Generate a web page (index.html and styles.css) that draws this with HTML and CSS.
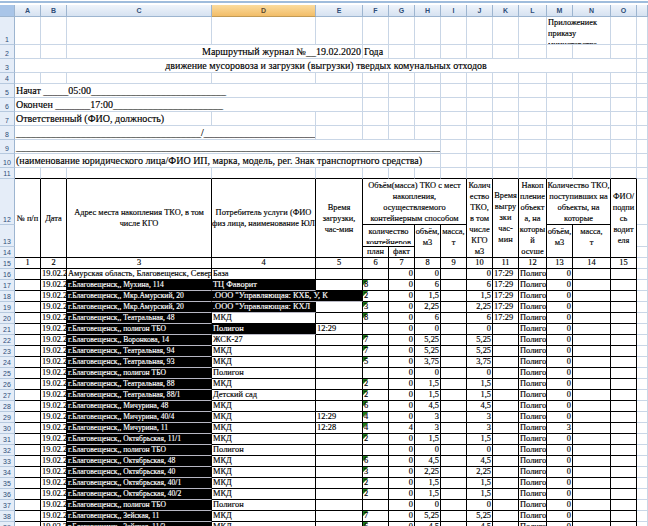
FILE: index.html
```html
<!DOCTYPE html>
<html lang="ru">
<head>
<meta charset="utf-8">
<title>Маршрутный журнал</title>
<link rel="stylesheet" href="styles.css">
</head>
<body>
<div class="ribbon-edge"></div>
<table class="sheet">
<colgroup>
<col class="w15"><col class="w26"><col class="w26"><col class="w145"><col class="w104"><col class="w47"><col class="w26"><col class="w26"><col class="w26"><col class="w26"><col class="w26"><col class="w26"><col class="w28"><col class="w26"><col class="w38"><col class="w26"><col class="w11">
</colgroup>
<tbody>
<tr class="h12 cols"><th class="corner"></th><th>A</th><th>B</th><th>C</th><th class="sel">D</th><th>E</th><th>F</th><th>G</th><th>H</th><th>I</th><th>J</th><th>K</th><th>L</th><th>M</th><th>N</th><th>O</th><th></th></tr>
<tr class="h28"><th>1</th><td></td><td></td><td></td><td></td><td></td><td></td><td></td><td></td><td></td><td></td><td></td><td></td><td colspan="2" class="note"><div class="clip28">Приложениек<br>приказу<br>министерства</div></td><td></td><td></td></tr>
<tr class="h14"><th>2</th><td></td><td></td><td colspan="3" class="right title">Маршрутный журнал №__19.02.2020</td><td class="title">Года</td><td></td><td></td><td></td><td></td><td></td><td></td><td></td><td></td><td></td><td></td></tr>
<tr class="h14"><th>3</th><td colspan="15" class="center title">движение мусоровоза и загрузки (выгрузки) твердых комунальных отходов</td><td></td></tr>
<tr class="h11"><th>4</th><td></td><td></td><td></td><td></td><td></td><td></td><td></td><td></td><td></td><td></td><td></td><td></td><td></td><td></td><td></td><td></td></tr>
<tr class="h14"><th>5</th><td colspan="5" class="title">Начат _____05:00___________________________</td><td></td><td></td><td></td><td></td><td></td><td></td><td></td><td></td><td></td><td></td><td></td></tr>
<tr class="h14"><th>6</th><td colspan="5" class="title">Окончен _______17:00______________________</td><td></td><td></td><td></td><td></td><td></td><td></td><td></td><td></td><td></td><td></td><td></td></tr>
<tr class="h14"><th>7</th><td colspan="3" class="title">Ответственный (ФИО, должность)</td><td></td><td></td><td></td><td></td><td></td><td></td><td></td><td></td><td></td><td></td><td></td><td></td><td></td></tr>
<tr class="h14"><th>8</th><td colspan="4" class="title">_____________________________________/_______________________</td><td></td><td></td><td></td><td></td><td></td><td></td><td></td><td></td><td></td><td></td><td></td><td></td></tr>
<tr class="h14"><th>9</th><td colspan="8" class="title">_____________________________________________________________________________________</td><td></td><td></td><td></td><td></td><td></td><td></td><td></td><td></td></tr>
<tr class="h14"><th>10</th><td colspan="8" class="title">(наименование юридического лица/ФИО ИП, марка, модель, рег. Знак транспортного средства)</td><td></td><td></td><td></td><td></td><td></td><td></td><td></td><td></td></tr>
<tr class="h11 under"><th>11</th><td></td><td></td><td></td><td></td><td></td><td></td><td></td><td></td><td></td><td></td><td></td><td></td><td></td><td></td><td></td><td class="plain"></td></tr>

<tr class="h46 hd"><th>12</th>
<td rowspan="3">№ п/п</td>
<td rowspan="3">Дата</td>
<td rowspan="3">Адрес места накопления ТКО, в том<br>числе КГО</td>
<td rowspan="3">Потребитель услуги (ФИО<br>физ лица, наименование ЮЛ)</td>
<td rowspan="3">Время<br>загрузки,<br>час-мин</td>
<td colspan="4">Объём(масса) ТКО с мест<br>накопления,<br>осуществляемого<br>контейнерным способом</td>
<td rowspan="3" class="top">Колич<br>ество<br>ТКО,<br>в том<br>числе<br>КГО<br>м3</td>
<td rowspan="3" class="top pad">Время<br>выгру<br>зки<br>час-<br>мин</td>
<td rowspan="3" class="top"><div class="clip-l">Накоп<br>пление<br>объект<br>а, на<br>которы<br>й<br>осуще</div></td>
<td colspan="2">Количество ТКО,<br>поступивших на<br>объекты, на<br>которые</td>
<td rowspan="3" class="top pad2">ФИО/<br>подпи<br>сь<br>водит<br>еля</td>
<td class="plain"></td></tr>
<tr class="h19 hd"><th>13</th>
<td colspan="2" class="top"><div class="clip18">количество<br>контейнеров</div></td>
<td rowspan="2" class="top">объём,<br>м3</td>
<td rowspan="2" class="top">масса,<br>т</td>
<td rowspan="2" class="top">объём,<br>м3</td>
<td rowspan="2" class="top">масса,<br>т</td>
<td class="plain"></td></tr>
<tr class="h11 hd"><th>14</th><td>план</td><td>факт</td><td class="plain"></td></tr>
<tr class="h11 hd"><th>15</th><td>1</td><td>2</td><td>3</td><td>4</td><td>5</td><td>6</td><td>7</td><td>8</td><td>9</td><td>10</td><td>11</td><td>12</td><td>13</td><td>14</td><td>15</td><td class="plain"></td></tr>

<tr class="h11 dt"><th>16</th><td></td><td>19.02.2020</td><td>Амурская область, Благовещенск, Северное шоссе</td><td>База</td><td></td><td></td><td class="right">0</td><td class="right">0</td><td></td><td class="right">0</td><td>17:29</td><td>Полигон</td><td class="right">0</td><td></td><td></td><td class="plain"></td></tr>
<tr class="h11 dt"><th>17</th><td></td><td>19.02.2020</td><td class="ink addr">г.Благовещенск,, Мухина, 114</td><td class="ink">ТЦ Фаворит</td><td></td><td class="flag">8</td><td class="right">0</td><td class="right">6</td><td></td><td class="right">6</td><td>17:29</td><td>Полигон</td><td class="right">0</td><td></td><td></td><td class="plain"></td></tr>
<tr class="h11 dt"><th>18</th><td></td><td>19.02.2020</td><td class="ink addr">г.Благовещенск,, Мкр.Амурский, 20</td><td class="ink" colspan="2">.ООО "Управляющая: КХБ, У, К</td><td class="flag">2</td><td class="right">0</td><td class="right">1,5</td><td></td><td class="right">1,5</td><td>17:29</td><td>Полигон</td><td class="right">0</td><td></td><td></td><td class="plain"></td></tr>
<tr class="h11 dt"><th>19</th><td></td><td>19.02.2020</td><td class="ink addr">г.Благовещенск,, Мкр.Амурский, 20</td><td class="ink">.ООО "Управляющая: КХЛ</td><td></td><td class="flag">3</td><td class="right">0</td><td class="right">2,25</td><td></td><td class="right">2,25</td><td>17:29</td><td>Полигон</td><td class="right">0</td><td></td><td></td><td class="plain"></td></tr>
<tr class="h11 dt"><th>20</th><td></td><td>19.02.2020</td><td class="ink addr">г.Благовещенск,, Театральная, 48</td><td>МКД</td><td></td><td class="flag">8</td><td class="right">0</td><td class="right">6</td><td></td><td class="right">6</td><td>17:29</td><td>Полигон</td><td class="right">0</td><td></td><td></td><td class="plain"></td></tr>
<tr class="h11 dt"><th>21</th><td></td><td>19.02.2020</td><td class="ink addr">г.Благовещенск,, полигон ТБО</td><td class="ink">Полигон</td><td>12:29</td><td></td><td class="right">0</td><td class="right">0</td><td></td><td class="right">0</td><td></td><td>Полигон</td><td class="right">0</td><td></td><td></td><td class="plain"></td></tr>
<tr class="h11 dt"><th>22</th><td></td><td>19.02.2020</td><td class="ink addr">г.Благовещенск,, Воронкова, 14</td><td>ЖСК-27</td><td></td><td class="flag">7</td><td class="right">0</td><td class="right">5,25</td><td></td><td class="right">5,25</td><td></td><td>Полигон</td><td class="right">0</td><td></td><td></td><td class="plain"></td></tr>
<tr class="h11 dt"><th>23</th><td></td><td>19.02.2020</td><td class="ink addr">г.Благовещенск,, Театральная, 94</td><td>МКД</td><td></td><td class="flag">7</td><td class="right">0</td><td class="right">5,25</td><td></td><td class="right">5,25</td><td></td><td>Полигон</td><td class="right">0</td><td></td><td></td><td class="plain"></td></tr>
<tr class="h11 dt"><th>24</th><td></td><td>19.02.2020</td><td class="ink addr">г.Благовещенск,, Театральная, 93</td><td>МКД</td><td></td><td class="flag">5</td><td class="right">0</td><td class="right">3,75</td><td></td><td class="right">3,75</td><td></td><td>Полигон</td><td class="right">0</td><td></td><td></td><td class="plain"></td></tr>
<tr class="h11 dt"><th>25</th><td></td><td>19.02.2020</td><td class="ink addr">г.Благовещенск,, полигон ТБО</td><td>Полигон</td><td></td><td></td><td class="right">0</td><td class="right">0</td><td></td><td class="right">0</td><td></td><td>Полигон</td><td class="right">0</td><td></td><td></td><td class="plain"></td></tr>
<tr class="h11 dt"><th>26</th><td></td><td>19.02.2020</td><td class="ink addr">г.Благовещенск,, Театральная, 88</td><td>МКД</td><td></td><td class="flag">2</td><td class="right">0</td><td class="right">1,5</td><td></td><td class="right">1,5</td><td></td><td>Полигон</td><td class="right">0</td><td></td><td></td><td class="plain"></td></tr>
<tr class="h11 dt"><th>27</th><td></td><td>19.02.2020</td><td class="ink addr">г.Благовещенск,, Театральная, 88/1</td><td>Детский сад</td><td></td><td class="flag">2</td><td class="right">0</td><td class="right">1,5</td><td></td><td class="right">1,5</td><td></td><td>Полигон</td><td class="right">0</td><td></td><td></td><td class="plain"></td></tr>
<tr class="h11 dt"><th>28</th><td></td><td>19.02.2020</td><td class="ink addr">г.Благовещенск,, Мичурина, 48</td><td>МКД</td><td></td><td class="flag">6</td><td class="right">0</td><td class="right">4,5</td><td></td><td class="right">4,5</td><td></td><td>Полигон</td><td class="right">0</td><td></td><td></td><td class="plain"></td></tr>
<tr class="h11 dt"><th>29</th><td></td><td>19.02.2020</td><td class="ink addr">г.Благовещенск,, Мичурина, 40/4</td><td>МКД</td><td>12:29</td><td class="flag">4</td><td class="right">0</td><td class="right">3</td><td></td><td class="right">3</td><td></td><td>Полигон</td><td class="right">0</td><td></td><td></td><td class="plain"></td></tr>
<tr class="h11 dt"><th>30</th><td></td><td>19.02.2020</td><td class="ink addr">г.Благовещенск,, Мичурина, 11</td><td>МКД</td><td>12:28</td><td class="flag">4</td><td class="right">4</td><td class="right">3</td><td></td><td class="right">3</td><td></td><td>Полигон</td><td class="right">3</td><td></td><td></td><td class="plain"></td></tr>
<tr class="h11 dt"><th>31</th><td></td><td>19.02.2020</td><td class="ink addr">г.Благовещенск,, Октябрьская, 11/1</td><td>МКД</td><td></td><td class="flag">2</td><td class="right">0</td><td class="right">1,5</td><td></td><td class="right">1,5</td><td></td><td>Полигон</td><td class="right">0</td><td></td><td></td><td class="plain"></td></tr>
<tr class="h11 dt"><th>32</th><td></td><td>19.02.2020</td><td class="ink addr">г.Благовещенск,, полигон ТБО</td><td>Полигон</td><td></td><td></td><td class="right">0</td><td class="right">0</td><td></td><td class="right">0</td><td></td><td>Полигон</td><td class="right">0</td><td></td><td></td><td class="plain"></td></tr>
<tr class="h11 dt"><th>33</th><td></td><td>19.02.2020</td><td class="ink addr">г.Благовещенск,, Октябрьская, 48</td><td>МКД</td><td></td><td class="flag">6</td><td class="right">0</td><td class="right">4,5</td><td></td><td class="right">4,5</td><td></td><td>Полигон</td><td class="right">0</td><td></td><td></td><td class="plain"></td></tr>
<tr class="h11 dt"><th>34</th><td></td><td>19.02.2020</td><td class="ink addr">г.Благовещенск,, Октябрьская, 40</td><td>МКД</td><td></td><td class="flag">3</td><td class="right">0</td><td class="right">2,25</td><td></td><td class="right">2,25</td><td></td><td>Полигон</td><td class="right">0</td><td></td><td></td><td class="plain"></td></tr>
<tr class="h11 dt"><th>35</th><td></td><td>19.02.2020</td><td class="ink addr">г.Благовещенск,, Октябрьская, 40/1</td><td>МКД</td><td></td><td class="flag">2</td><td class="right">0</td><td class="right">1,5</td><td></td><td class="right">1,5</td><td></td><td>Полигон</td><td class="right">0</td><td></td><td></td><td class="plain"></td></tr>
<tr class="h11 dt"><th>36</th><td></td><td>19.02.2020</td><td class="ink addr">г.Благовещенск,, Октябрьская, 40/2</td><td>МКД</td><td></td><td class="flag">2</td><td class="right">0</td><td class="right">1,5</td><td></td><td class="right">1,5</td><td></td><td>Полигон</td><td class="right">0</td><td></td><td></td><td class="plain"></td></tr>
<tr class="h11 dt"><th>37</th><td></td><td>19.02.2020</td><td class="ink addr">г.Благовещенск,, полигон ТБО</td><td>Полигон</td><td></td><td></td><td class="right">0</td><td class="right">0</td><td></td><td class="right">0</td><td></td><td>Полигон</td><td class="right">0</td><td></td><td></td><td class="plain"></td></tr>
<tr class="h11 dt"><th>38</th><td></td><td>19.02.2020</td><td class="ink addr">г.Благовещенск,, Зейская, 11</td><td>МКД</td><td></td><td class="flag">7</td><td class="right">0</td><td class="right">5,25</td><td></td><td class="right">5,25</td><td></td><td>Полигон</td><td class="right">0</td><td></td><td></td><td class="plain"></td></tr>
<tr class="h11 dt"><th>39</th><td></td><td>19.02.2020</td><td class="ink addr">г.Благовещенск,, Зейская, 11/3</td><td>МКД</td><td></td><td class="flag">6</td><td class="right">0</td><td class="right">4,5</td><td></td><td class="right">4,5</td><td></td><td>Полигон</td><td class="right">0</td><td></td><td></td><td class="plain"></td></tr>
</tbody>
</table>
</body>
</html>
```

FILE: styles.css
```css
html, body {
  margin: 0;
  padding: 0;
  width: 648px;
  height: 526px;
  overflow: hidden;
  background: #fff;
}

.ribbon-edge {
  height: 5px;
  box-sizing: border-box;
  border-top: 1px solid #fff;
  border-bottom: 2px solid #fff;
  background-clip: padding-box;
  background-color: #9fbcdc;
}

.sheet {
  table-layout: fixed;
  border-collapse: separate;
  border-spacing: 0;
  width: 648px;
  font-family: "Liberation Serif", "Times New Roman", serif;
  font-size: 8.4px;
  line-height: 11px;
  color: #000;
}

.w15 { width: 15px; }
.w26 { width: 26px; }
.w145 { width: 145px; }
.w104 { width: 104px; }
.w47 { width: 47px; }
.w28 { width: 28px; }
.w38 { width: 38px; }
.w11 { width: 11px; }

.h11 { height: 11px; }
.h12 { height: 12px; }
.h14 { height: 14px; }
.h19 { height: 19px; }
.h28 { height: 28px; }
.h46 { height: 46px; }

.sheet td,
.sheet th {
  box-sizing: border-box;
  padding: 0;
  overflow: hidden;
  white-space: nowrap;
  border-right: 1px solid #c9d6e6;
  border-bottom: 1px solid #c9d6e6;
}

.sheet td {
  padding-left: 1px;
  vertical-align: middle;
  -webkit-text-stroke: 0.15px currentColor;
}

.sheet .h11 td {
  line-height: 10px;
}

.sheet .h14 td {
  line-height: 13px;
}

.sheet th {
  font-family: "Liberation Sans", Arial, sans-serif;
  font-size: 7px;
  line-height: 8px;
  font-weight: normal;
  color: #2f4d78;
  background: #e5edf8;
  border-right-color: #9db5d0;
  border-bottom-color: #b6c9df;
  vertical-align: bottom;
  text-align: center;
}

.sheet .cols th {
  background: linear-gradient(#eff4fb, #d6e2f1);
  border-right-color: #9db5d0;
  border-bottom-color: #9db5d0;
  vertical-align: middle;
  font-weight: bold;
}

.sheet .cols th.corner {
  background: #a9c5e8;
}

.sheet .cols th.sel {
  background: linear-gradient(#fbdc9f, #f2bd68);
  color: #5b4a2e;
  border-bottom-color: #c29b55;
}

.title {
  font-size: 10px;
}

.sheet td.right {
  text-align: right;
  padding-right: 1px;
}

.sheet td.center {
  text-align: center;
}

.sheet td.note {
  vertical-align: top;
}

.clip28 {
  height: 27px;
  overflow: hidden;
}

.clip18 {
  height: 18px;
  overflow: hidden;
}

.clip-l {
  height: 74px;
  overflow: hidden;
}

.sheet .under td {
  border-bottom-color: #000;
}

.hd td,
.dt td {
  border-right-color: #000;
  border-bottom-color: #000;
}

.hd td {
  text-align: center;
  padding-left: 0;
}

.sheet .hd td.top {
  vertical-align: top;
  padding-top: 1px;
}

.sheet .hd td.pad {
  padding-top: 11px;
}

.sheet .hd td.pad2 {
  padding-top: 12px;
}

.sheet td.plain,
.sheet .under td.plain {
  border-right-color: #c9d6e6;
  border-bottom-color: #c9d6e6;
}

.sheet td.ink {
  background: #000;
  color: #fff;
  border-bottom-color: #b8b8c4;
}

.sheet td.addr {
  font-size: 7.6px;
}

.sheet td.flag {
  background: linear-gradient(135deg, #1b7a1b 3.5px, transparent 3.6px);
}
```
